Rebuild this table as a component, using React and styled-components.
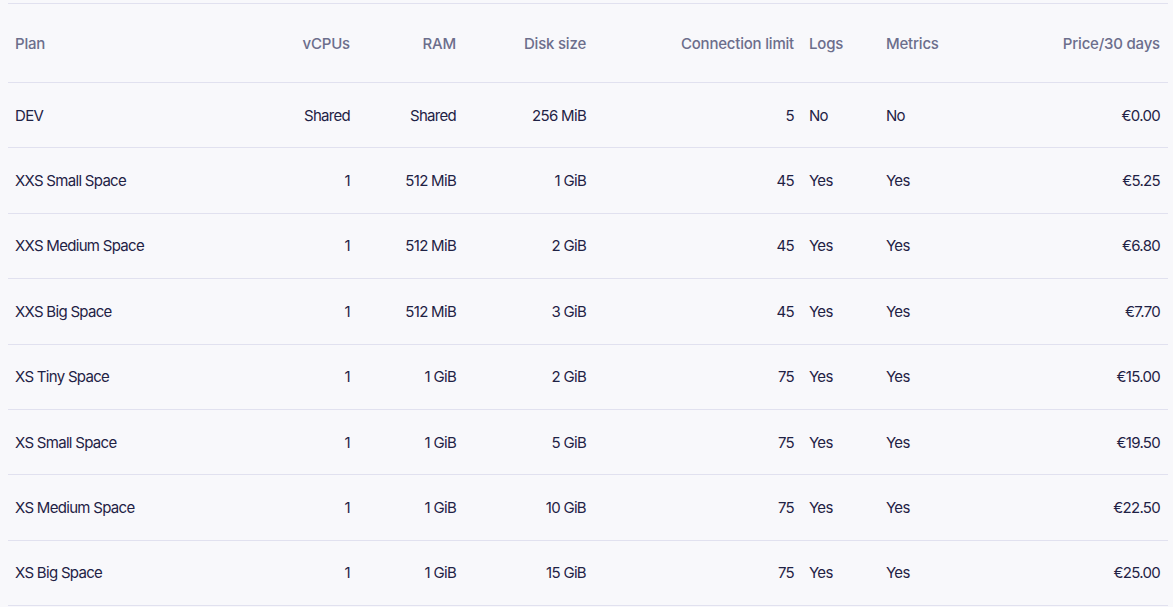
import React from "react";
import styled, { createGlobalStyle } from "styled-components";

const GlobalStyle = createGlobalStyle`
	html, body {
		background: #f8f8fb;
	}
	body {
		margin: 3px 5px 0 8px;
		font-family: Inter, "Noto Sans", sans-serif;
	}
`;

const Table = styled.table`
	width: 1160px;
	border-collapse: collapse;
	table-layout: fixed;
	font-size: 15px;
`;

const HeadRow = styled.tr`
	height: 79px;
	border-top: 1px solid #e1e1ef;
	border-bottom: 1px solid #e1e1ef;
`;

const Row = styled.tr`
	height: 65.375px;
	border-bottom: 1px solid #e1e1ef;
`;

const Th = styled.th`
	padding: 0 8px 0 7px;
	font-weight: 500;
	letter-spacing: -0.2px;
	color: #6c6e8c;
	text-align: ${p => (p.$right ? "right" : "left")};
	white-space: nowrap;
`;

const Td = styled.td`
	padding: 0 8px 0 7px;
	font-weight: 400;
	letter-spacing: -0.7px;
	color: #1f2245;
	text-align: ${p => (p.$right ? "right" : "left")};
	white-space: nowrap;
`;

const columns = [
	{ label: "Plan", width: 250 },
	{ label: "vCPUs", width: 100, right: true },
	{ label: "RAM", width: 106, right: true },
	{ label: "Disk size", width: 130, right: true },
	{ label: "Connection limit", width: 208, right: true },
	{ label: "Logs", width: 77 },
	{ label: "Metrics", width: 120 },
	{ label: "Price/30 days", width: 169, right: true }
];

const plans = [
	["DEV", "Shared", "Shared", "256 MiB", "5", "No", "No", "€0.00"],
	["XXS Small Space", "1", "512 MiB", "1 GiB", "45", "Yes", "Yes", "€5.25"],
	["XXS Medium Space", "1", "512 MiB", "2 GiB", "45", "Yes", "Yes", "€6.80"],
	["XXS Big Space", "1", "512 MiB", "3 GiB", "45", "Yes", "Yes", "€7.70"],
	["XS Tiny Space", "1", "1 GiB", "2 GiB", "75", "Yes", "Yes", "€15.00"],
	["XS Small Space", "1", "1 GiB", "5 GiB", "75", "Yes", "Yes", "€19.50"],
	["XS Medium Space", "1", "1 GiB", "10 GiB", "75", "Yes", "Yes", "€22.50"],
	["XS Big Space", "1", "1 GiB", "15 GiB", "75", "Yes", "Yes", "€25.00"]
];

const App = () => (
	<>
		<GlobalStyle />
		<Table>
			<colgroup>
				{columns.map(c => (
					<col key={c.label} style={{ width: c.width }} />
				))}
			</colgroup>
			<thead>
				<HeadRow>
					{columns.map(c => (
						<Th key={c.label} $right={c.right}>
							{c.label}
						</Th>
					))}
				</HeadRow>
			</thead>
			<tbody>
				{plans.map(plan => (
					<Row key={plan[0]}>
						{plan.map((value, i) => (
							<Td key={i} $right={columns[i].right}>
								{value}
							</Td>
						))}
					</Row>
				))}
			</tbody>
		</Table>
	</>
);

export default App;
